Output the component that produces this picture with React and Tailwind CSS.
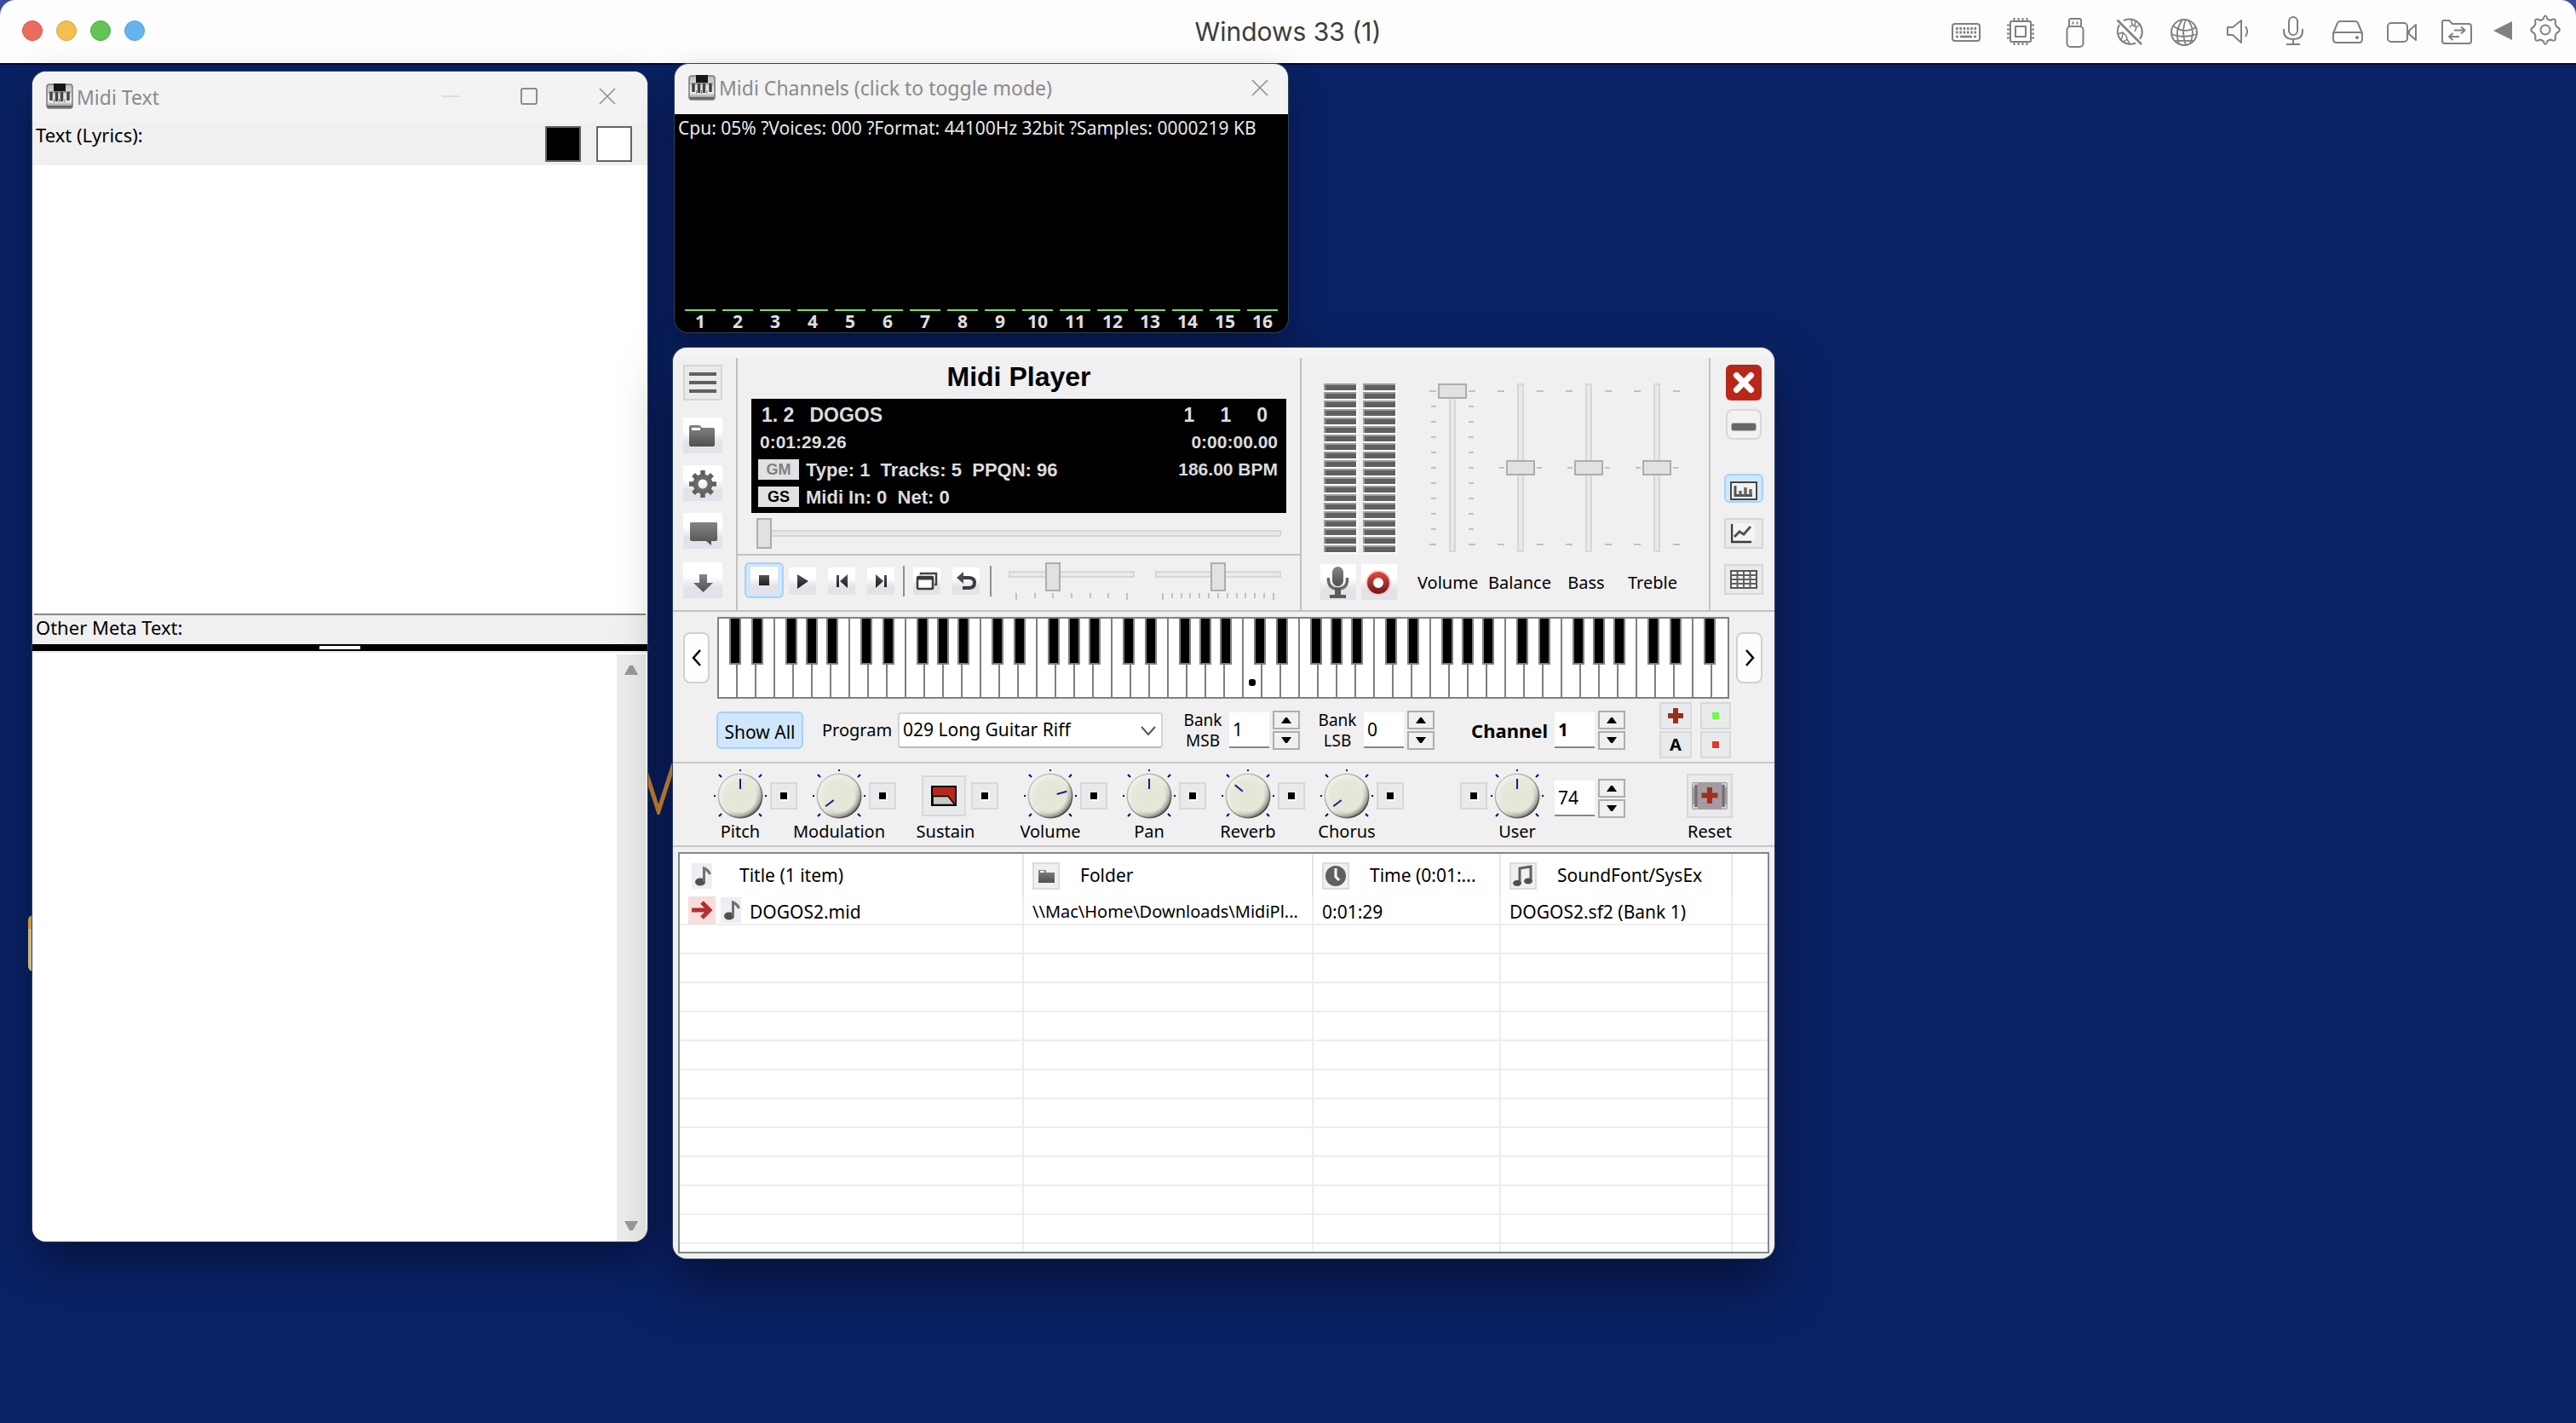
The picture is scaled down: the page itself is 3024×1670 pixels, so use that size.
import React from "react";

const UI = "font-['Noto_Sans','Open_Sans',sans-serif]";
const ARIAL = "font-['Liberation_Sans',Arial,sans-serif]";

/* ---------- menu bar icons ---------- */

function BarIcon({ label, children, className = "w-16" }) {
  return (
    <button type="button" aria-label={label} className={`flex h-[74px] items-center justify-center ${className}`}>
      <svg viewBox="0 0 40 40" className="h-10 w-10" fill="none" stroke="#808080" strokeWidth="2" strokeLinejoin="round">
        {children}
      </svg>
    </button>
  );
}

function MenuBarIcons() {
  return (
    <div className="absolute right-2 top-0 flex">
      <BarIcon label="Keyboard">
        <rect x="4" y="11" width="32" height="20" rx="3" />
        <path d="M8 16.500h24M8 21h24" strokeWidth="3" strokeDasharray="2.6 1.7" />
        <path d="M8 26h3M13 26h14M29 26h3" strokeWidth="2.600" />
      </BarIcon>
      <BarIcon label="Processor">
        <rect x="8" y="8" width="24" height="24" rx="1" />
        <rect x="14" y="14" width="12" height="12" />
        <path d="M12.500 4v4M17.500 4v4M22.500 4v4M27.500 4v4M12.500 32v4M17.500 32v4M22.500 32v4M27.500 32v4M4 12.500h4M4 17.500h4M4 22.500h4M4 27.500h4M32 12.500h4M32 17.500h4M32 22.500h4M32 27.500h4" />
      </BarIcon>
      <BarIcon label="USB">
        <rect x="10.500" y="14" width="19" height="24" rx="4" />
        <path d="M13 14V7q0-2 2-2h10q2 0 2 2v7M17.500 8.500v3M22.500 8.500v3" />
      </BarIcon>
      <BarIcon label="Network disconnected">
        <path d="M13 7A15 15 0 0 1 32 29M8 12A15 15 0 0 0 27 33.500" />
        <path d="M5.500 6.500L34 35" strokeWidth="2.500" />
        <path d="M22 6l1 6-3 3M23 12l5 3 5-4M28 15l-2 5M27 8l-1 5M6 23l6-2 4 4M12 21l-1 7-3 2M16 25l1 4-4 3M17 29l3 5" strokeWidth="1.500" />
      </BarIcon>
      <BarIcon label="Globe">
        <circle cx="20" cy="21" r="15" />
        <path d="M18 6Q8 20 14 34M22 6Q16 20 22 36M24 6Q34 18 27 34M8 14Q20 23 34 15M5 23Q18 29 35 23M9 31Q20 30 32 31" strokeWidth="1.750" />
      </BarIcon>
      <BarIcon label="Sound">
        <path d="M7 15h6l10-8v26l-10-9H7zM28 14q4 6 0 12" />
      </BarIcon>
      <BarIcon label="Microphone">
        <rect x="15" y="3" width="10" height="21" rx="5" />
        <path d="M9 17v2q0 10 11 10t11-10v-2M20 29v6M12 35h16" />
      </BarIcon>
      <BarIcon label="Disk">
        <path d="M3 22L8 10q1-2 3-2h18q2 0 3 2l5 12v7q0 4-4 4H7q-4 0-4-4zM3 22q1-1 4-1h26q3 0 4 1" />
        <circle cx="31" cy="27" r="1.500" fill="#808080" strokeWidth="1" />
      </BarIcon>
      <BarIcon label="Camera">
        <rect x="3" y="10" width="23" height="22" rx="4" />
        <path d="M28 19l8-7v18l-8-7z" />
      </BarIcon>
      <BarIcon label="Shared folder">
        <path d="M3 9q0-2 2-2h6l4 4h19q3 0 3 3v17q0 3-3 3H6q-3 0-3-3z" />
        <path d="M17 18.500h12M25 14.500l4.500 4-4.500 4M23 26H11.500M15.500 22l-4.500 4 4.500 4" />
      </BarIcon>
      <BarIcon label="Collapse" className="w-11">
        <path d="M9 19L31 8v22z" fill="#808080" stroke="none" />
      </BarIcon>
      <BarIcon label="Settings" className="w-14">
        <circle cx="20" cy="18" r="5.500" />
        <path d="M17.500 5.500Q20 -2.500 22.500 5.500L26 7Q33.500 3 31.500 10.500L33 14Q40.500 18 33 22L31.500 25.500Q33.500 33 26 29.500L22.500 31Q20 38.500 17.500 31L14 29.500Q6.500 33 8.500 25.500L7 22Q-.5 18 7 14L8.500 10.500Q6.500 3 14 7z" />
      </BarIcon>
    </div>
  );
}

function AppIcon() {
  return (
    <svg viewBox="0 0 32 30" className="h-[30px] w-8 shrink-0" aria-hidden="true">
      <defs>
        <linearGradient id="appBody" x1="0" y1="0" x2="0" y2="1">
          <stop offset="0" stopColor="#bcbcbc" />
          <stop offset=".7" stopColor="#f2f2f2" />
          <stop offset="1" stopColor="#777" />
        </linearGradient>
      </defs>
      <rect x="1" y="1" width="30" height="28" rx="3" fill="url(#appBody)" stroke="#777" strokeWidth="1.500" />
      <rect x="9" y="0" width="14" height="9" fill="#161616" />
      <path d="M3 10h26" stroke="#888" strokeWidth="1.500" />
      <path d="M6 10v10M12.500 10v11M18.500 10v11M26 10v10" stroke="#444" strokeWidth="3.500" />
      <path d="M9.500 18v4M15.500 18v4M22 18v4" stroke="#777" strokeWidth="1" />
      <path d="M2 27h28" stroke="#666" strokeWidth="2" />
    </svg>
  );
}

function CloseGlyph() {
  return (
    <svg viewBox="0 0 20 20" className="h-5 w-5" stroke="#8c8c8c" strokeWidth="1.500">
      <path d="M1 1L19 19M19 1L1 19" />
    </svg>
  );
}

/* ---------- Midi Text window ---------- */

function MidiTextWindow() {
  return (
    <section className="absolute left-[38px] top-[84px] flex h-[1373px] w-[722px] flex-col overflow-hidden rounded-2xl bg-white shadow-[0_0_0_1px_#33415f,0_24px_50px_rgba(0,0,20,0.45)]">
      <header className="flex h-[60px] shrink-0 items-center bg-[#f3f3f3] pb-0.5 pl-4 pr-[37px]">
        <AppIcon />
        <h2 className="grow pl-1 pt-0.5 text-[23px] leading-8 text-[#8a8a8a]">Midi Text</h2>
        <div className="flex items-center gap-[72px]">
          <button type="button" aria-label="Minimize" className="flex h-5 w-5 items-center">
            <span className="block h-0.5 w-5 bg-[#dcdcdc]" />
          </button>
          <button type="button" aria-label="Maximize" className="h-5 w-5 rounded-[3px] border-2 border-[#8c8c8c]" />
          <button type="button" aria-label="Close">
            <CloseGlyph />
          </button>
        </div>
      </header>
      <div className="flex h-[50px] shrink-0 justify-between bg-[#f0f0f0] pl-1 pr-[18px] pt-1">
        <label htmlFor="lyrics" className="text-[22px] leading-5 text-black">Text (Lyrics):</label>
        <div className="flex gap-[18px]">
          <button type="button" aria-label="Text colour" className="h-[42px] w-[42px] border-2 border-[#646464] bg-black" />
          <button type="button" aria-label="Background colour" className="h-[42px] w-[42px] border-2 border-[#646464] bg-white" />
        </div>
      </div>
      <textarea id="lyrics" readOnly className="mx-0.5 h-[528px] shrink-0 resize-none border-b-2 border-[#868686] bg-white outline-none" />
      <div className="h-[34px] shrink-0 bg-[#f0f0f0] pl-1">
        <label htmlFor="meta" className="text-[22px] leading-7 text-black">Other Meta Text:</label>
      </div>
      <div className="flex h-2 shrink-0 items-center justify-center bg-black">
        <span className="h-1 w-12 bg-white" />
      </div>
      <div className="flex grow border-t-2 border-[#ececec]">
        <textarea id="meta" readOnly className="grow resize-none bg-white outline-none" />
        <div className="mr-0.5 mt-0.5 flex w-[34px] flex-col items-center justify-between bg-[#ececec] py-3">
          <svg viewBox="0 0 16 12" className="h-3 w-4" fill="#9a9a9a"><path d="M0 12L6 1h4l6 11z" /></svg>
          <svg viewBox="0 0 16 12" className="h-3 w-4" fill="#9a9a9a"><path d="M0 0L6 11h4l6-11z" /></svg>
        </div>
      </div>
    </section>
  );
}

/* ---------- Midi Channels window ---------- */

function ChannelsWindow() {
  const channels = Array.from({ length: 16 }, (_, i) => i + 1);
  return (
    <section className="absolute left-[792px] top-[75px] flex h-[315px] w-[720px] flex-col overflow-hidden rounded-2xl bg-black shadow-[0_0_0_1px_#33415f,0_20px_40px_rgba(0,0,20,0.4)]">
      <header className="flex h-[59px] shrink-0 items-center bg-[#f3f3f3] pb-1 pl-4 pr-[23px]">
        <AppIcon />
        <h2 className="grow whitespace-nowrap pl-1 text-[23px] leading-8 text-[#8a8a8a]">Midi Channels (click to toggle mode)</h2>
        <button type="button" aria-label="Close">
          <CloseGlyph />
        </button>
      </header>
      <p className="whitespace-nowrap pl-1 pt-0.5 text-[21px] leading-7 text-[#e8e8e8]">
        Cpu: 05% ?Voices: 000 ?Format: 44100Hz 32bit ?Samples: 0000219 KB
      </p>
      <ol className="mt-auto grid grid-cols-16 px-2">
        {channels.map((n) => (
          <li key={n} className="flex flex-col items-center pb-px">
            <span className="h-0.5 w-9 bg-[#77e05a]" />
            <span className="text-[21px] font-bold leading-6 text-[#e0e0e0]">{n}</span>
          </li>
        ))}
      </ol>
    </section>
  );
}

/* ---------- player pieces ---------- */

function ShadedDefs() {
  return (
    <svg className="absolute h-0 w-0" aria-hidden="true">
      <defs>
        <linearGradient id="shade" x1="0" y1="0" x2="0" y2="1">
          <stop offset="0" stopColor="#858585" />
          <stop offset="1" stopColor="#505050" />
        </linearGradient>
        <linearGradient id="shadeDark" x1="0" y1="0" x2="0" y2="1">
          <stop offset="0" stopColor="#555" />
          <stop offset="1" stopColor="#1c1c1c" />
        </linearGradient>
        <linearGradient id="shadeRed" x1="0" y1="0" x2="0" y2="1">
          <stop offset="0" stopColor="#d2443c" />
          <stop offset="1" stopColor="#7e1c1c" />
        </linearGradient>
        <linearGradient id="knobRim" x1=".15" y1=".1" x2=".85" y2=".9">
          <stop offset="0" stopColor="#c9c9c9" />
          <stop offset=".5" stopColor="#a5a5a0" />
          <stop offset=".75" stopColor="#777" />
          <stop offset="1" stopColor="#333" />
        </linearGradient>
        <radialGradient id="knobFace" cx=".5" cy=".5" r=".5" fx=".5" fy=".5">
          <stop offset="0" stopColor="#e3e5d5" />
          <stop offset=".72" stopColor="#e6e8da" />
          <stop offset="1" stopColor="#e6e8da" stopOpacity="0" />
        </radialGradient>
        <linearGradient id="knobShine" x1=".15" y1=".1" x2=".85" y2=".9">
          <stop offset="0" stopColor="#f4f4f0" />
          <stop offset=".55" stopColor="#e9e9df" />
          <stop offset="1" stopColor="#6a6a66" />
        </linearGradient>
      </defs>
    </svg>
  );
}

const GLOSS = "bg-linear-to-b from-white from-40% to-[#e2e2e8] to-70%";

function SideButton({ label, children, className }) {
  return (
    <button type="button" aria-label={label} className={`flex h-[42px] w-[46px] items-center justify-center ${className}`}>
      <svg viewBox="0 0 34 34" className="h-[34px] w-[34px]">{children}</svg>
    </button>
  );
}

function LeftRail() {
  return (
    <div className="w-[76px] shrink-0 border-r-2 border-[#c2c2c2] pl-3 pt-2">
      <SideButton label="Menu" className="border-2 border-[#d4d6d8] bg-[#e8eaec]">
        <path d="M1 7h32M1 17h32M1 27h32" stroke="#606060" strokeWidth="4" />
      </SideButton>
      <SideButton label="Open" className={`mt-5 ${GLOSS}`}>
        <path d="M1 7q0-2 2-2h10q1 0 2 2l1 1h13q2 0 2 2v18q0 2-2 2H3q-2 0-2-2z" fill="url(#shade)" />
        <path d="M4 8h10v3H4z" fill="#fff" />
      </SideButton>
      <SideButton label="Settings" className={`mt-3.5 ${GLOSS}`}>
        <circle cx="17" cy="18" r="8.500" fill="none" stroke="#686868" strokeWidth="6" />
        <path d="M17 2v6M17 28v6M1 18h6M27 18h6M6 7l4 4M24 25l4 4M28 7l-4 4M10 25l-4 4" stroke="#606060" strokeWidth="5.500" />
      </SideButton>
      <SideButton label="Text" className={`mt-3.5 ${GLOSS}`}>
        <path d="M2 8q0-1 2-1h28q2 0 2 1v19q0 2-2 2h-5v5l-6-5H4q-2 0-2-2z" fill="url(#shade)" />
      </SideButton>
      <SideButton label="Down" className={`mt-4 ${GLOSS}`}>
        <path d="M13 10h9v10h7L17.500 31 6 20h7z" fill="url(#shade)" />
      </SideButton>
    </div>
  );
}

function Lcd() {
  return (
    <div className={`mx-4 h-[134px] bg-black py-[3px] pl-2 pr-2.5 text-[21px] font-bold text-[#dcdcdc] ${ARIAL}`}>
      <div className="flex h-8 items-center justify-between pl-1 pr-3 text-[23px]">
        <span className="flex gap-[18px]"><span>1. 2</span><span>DOGOS</span></span>
        <span className="flex gap-[30px]"><span>1</span><span>1</span><span>0</span></span>
      </div>
      <div className="flex h-8 items-center justify-between pl-0.5">
        <span>0:01:29.26</span>
        <span>0:00:00.00</span>
      </div>
      <div className="flex h-8 items-center justify-between">
        <span className="flex items-center gap-2">
          <button type="button" className="h-6 w-12 bg-[#e1e1e1] text-[18px] leading-6 text-[#808080]">GM</button>
          <span className="whitespace-pre text-[22px]">Type: 1  Tracks: 5  PPQN: 96</span>
        </span>
        <span>186.00 BPM</span>
      </div>
      <div className="flex h-8 items-center gap-2">
        <button type="button" className="h-6 w-12 bg-[#e1e1e1] text-[18px] leading-6 text-black">GS</button>
        <span className="whitespace-pre text-[22px]">Midi In: 0  Net: 0</span>
      </div>
    </div>
  );
}

const RANGE =
  "block appearance-none bg-transparent outline-none [&::-webkit-slider-runnable-track]:bg-[#e7eaea] [&::-webkit-slider-runnable-track]:shadow-[inset_0_0_0_2px_#d6d6d6] [&::-webkit-slider-thumb]:appearance-none [&::-webkit-slider-thumb]:border-2 [&::-webkit-slider-thumb]:border-[#adadad] [&::-webkit-slider-thumb]:bg-[#e1e1e1]";

const H_RANGE = "h-2 w-full [&::-webkit-slider-runnable-track]:h-2 [&::-webkit-slider-thumb]:w-[18px]";

function TickSlider({ label, value, max }) {
  const ticks = Array.from({ length: max + 1 }, (_, i) => i);
  return (
    <div className="w-[148px]">
      <input
        type="range"
        aria-label={label}
        min="0"
        max={max}
        defaultValue={value}
        className={`${RANGE} ${H_RANGE} mt-[18px] [&::-webkit-slider-thumb]:-mt-2.5 [&::-webkit-slider-thumb]:h-[34px]`}
      />
      <div className="mt-[18px] flex justify-between px-2">
        {ticks.map((t) => (
          <span key={t} className={t === 0 || t === max ? "h-2 w-0.5 bg-[#c0c0c0]" : "h-1.5 w-0.5 bg-[#c0c0c0]"} />
        ))}
      </div>
    </div>
  );
}

function ToolButton({ label, children }) {
  return (
    <button type="button" aria-label={label} className={`flex h-8 w-8 items-center justify-center ${GLOSS}`}>
      <svg viewBox="0 0 32 32" className="h-8 w-8">{children}</svg>
    </button>
  );
}

function Toolbar() {
  return (
    <div className="flex h-16 items-start pl-2 pr-[22px]">
      <button type="button" aria-label="Stop" className="mt-2 flex h-[42px] w-[46px] items-center justify-center rounded-md border-2 border-[#a6d2fa] bg-[#cfe6fb]">
        <svg viewBox="0 0 32 32" className={`h-8 w-8 ${GLOSS}`}>
          <rect x="10" y="10" width="12" height="12" fill="url(#shadeDark)" />
        </svg>
      </button>
      <div className="mt-3.5 flex gap-3.5 pl-1.5">
        <ToolButton label="Play"><path d="M10 8l13 8-13 9z" fill="url(#shadeDark)" /></ToolButton>
        <ToolButton label="Previous"><path d="M10 9h3v14h-3zM23 8v16l-9-8z" fill="url(#shadeDark)" /></ToolButton>
        <ToolButton label="Next"><path d="M20 9h3v14h-3zM10 8v16l9-8z" fill="url(#shadeDark)" /></ToolButton>
      </div>
      <span className="ml-2.5 mt-3 h-9 w-0.5 bg-[#909090]" />
      <div className="mt-3.5 flex gap-3.5 pl-2.5">
        <ToolButton label="Windows">
          <path d="M9 8.500V7h18v13h-2" fill="none" stroke="#444" strokeWidth="2.500" />
          <rect x="5" y="11" width="18" height="14" rx="1" fill="#fff" stroke="#3a3a3a" strokeWidth="2.500" />
          <path d="M5 13h18" stroke="#3a3a3a" strokeWidth="3" />
        </ToolButton>
        <ToolButton label="Undo">
          <path d="M10 12h9q7 0 7 6t-7 6h-7" fill="none" stroke="#3c3c3c" strokeWidth="4" />
          <path d="M5 12l8-7v14z" fill="#4a4a4a" />
        </ToolButton>
      </div>
      <span className="ml-3 mt-3 h-9 w-0.5 bg-[#909090]" />
      <div className="flex grow justify-end gap-6">
        <TickSlider label="Tempo" value={2} max={6} />
        <TickSlider label="Key" value={6} max={12} />
      </div>
    </div>
  );
}

function Meter() {
  return (
    <div className="flex w-[38px] flex-col gap-0.5">
      {Array.from({ length: 20 }, (_, i) => (
        <span key={i} className="h-2 border-l-2 border-t-2 border-[#9c9c9c] bg-[#606060] shadow-[2px_2px_0_#fff]" />
      ))}
    </div>
  );
}

function VerticalSlider({ id, value, ticks }) {
  const col = Array.from({ length: ticks }, (_, i) => i);
  return (
    <div className="flex h-[198px] w-20 justify-between pl-3.5 pr-3">
      <div className="flex flex-col items-end justify-between py-2">
        {col.map((t) => (
          <span key={t} className={t === 0 || t === ticks - 1 ? "h-0.5 w-2 bg-[#c0c0c0]" : "h-0.5 w-1.5 bg-[#c0c0c0]"} />
        ))}
      </div>
      <input
        id={id}
        type="range"
        min="0"
        max="100"
        defaultValue={value}
        className={`${RANGE} h-[198px] w-2 [direction:rtl] [writing-mode:vertical-lr] [&::-webkit-slider-runnable-track]:w-2 [&::-webkit-slider-thumb]:-ml-[13px] [&::-webkit-slider-thumb]:h-[18px] [&::-webkit-slider-thumb]:w-[34px]`}
      />
      <div className="flex flex-col items-start justify-between py-2">
        {col.map((t) => (
          <span key={t} className={t === 0 || t === ticks - 1 ? "h-0.5 w-2 bg-[#c0c0c0]" : "h-0.5 w-1.5 bg-[#c0c0c0]"} />
        ))}
      </div>
    </div>
  );
}

function Mixer() {
  return (
    <div className="flex w-[480px] shrink-0 border-r-2 border-[#c2c2c2] pl-[22px] pt-[30px]">
      <div>
        <div className="flex gap-2 pl-1">
          <Meter />
          <Meter />
        </div>
        <div className="mt-3.5 flex gap-1.5">
          <button type="button" aria-label="Microphone" className={`h-[42px] w-[42px] ${GLOSS}`}>
            <svg viewBox="0 0 42 42" className="h-[42px] w-[42px]">
              <rect x="14" y="3" width="13" height="23" rx="6.500" fill="url(#shade)" />
              <path d="M9.500 16v4q1 9 11 9t11-9v-4" fill="none" stroke="#6a6a6a" strokeWidth="3.500" />
              <path d="M17 28h7v8h6v4H11v-4h6z" fill="#5a5a5a" />
            </svg>
          </button>
          <button type="button" aria-label="Record" className={`h-[42px] w-[42px] ${GLOSS}`}>
            <svg viewBox="0 0 42 42" className="h-[42px] w-[42px]">
              <circle cx="20" cy="22" r="15" fill="#f6c4c0" opacity=".7" />
              <circle cx="20" cy="22" r="9.500" fill="#fff" stroke="url(#shadeRed)" strokeWidth="7" />
            </svg>
          </button>
        </div>
      </div>
      <div className="ml-6">
        <div className="flex">
          <VerticalSlider id="vol" value={100} ticks={11} />
          <VerticalSlider id="bal" value={50} ticks={3} />
          <VerticalSlider id="bass" value={50} ticks={3} />
          <VerticalSlider id="treb" value={50} ticks={3} />
        </div>
        <div className="mt-[22px] flex text-center text-[20px] leading-7 text-black">
          <label htmlFor="vol" className="w-20 pr-2.5">Volume</label>
          <label htmlFor="bal" className="w-20">Balance</label>
          <label htmlFor="bass" className="w-20 pr-1">Bass</label>
          <label htmlFor="treb" className="w-20 pr-2">Treble</label>
        </div>
      </div>
    </div>
  );
}

function RightRail() {
  return (
    <div className="flex w-[75px] shrink-0 flex-col items-center pl-0.5 pt-2">
      <button type="button" aria-label="Close" className="h-[42px] w-[42px] rounded-md bg-[#b9271b]">
        <svg viewBox="0 0 42 42" className="h-[42px] w-[42px]">
          <path d="M12.500 12.500L29.500 29.500M29.500 12.500L12.500 29.500" stroke="#fff" strokeWidth="7" strokeLinecap="round" />
        </svg>
      </button>
      <button type="button" aria-label="Minimize" className="mt-2.5 flex h-9 w-[42px] items-center justify-center rounded-lg border-2 border-[#d6d8da] bg-[#f2f2f4]">
        <span className="mt-1.5 h-2 w-7 rounded-xs bg-[#666] shadow-[0_0_0_1px_#b4b4b4]" />
      </button>
      <button type="button" aria-label="Channels" className="mt-10 flex h-[34px] w-[46px] items-center justify-center rounded-md border-2 border-[#a6d2fa] bg-[#cfe6fb]">
        <svg viewBox="0 0 32 22" className="mt-1.5 h-[22px] w-8">
          <rect x="1" y="1" width="30" height="20" fill="#f2f2f2" stroke="#444" strokeWidth="2" />
          <path d="M6 5v11.500h20" fill="none" stroke="#555" strokeWidth="3" />
          <path d="M12 11v5M18 7v9M24 9v7" stroke="#666" strokeWidth="3.500" />
        </svg>
      </button>
      <button type="button" aria-label="Graph" className="mt-[18px] flex h-9 w-[46px] items-center border-2 border-[#d4d6d8] bg-[#e8eaec] pl-1.5">
        <svg viewBox="0 0 28 24" className="h-6 w-7">
          <rect x="2" y="0" width="26" height="21" fill="#f5f5f8" />
          <path d="M1 1v21h23" fill="none" stroke="#3c3c3c" strokeWidth="2.500" />
          <path d="M4 16l6-6 5 3 8-9" fill="none" stroke="#555" strokeWidth="3" />
        </svg>
      </button>
      <button type="button" aria-label="Grid" className="mt-[18px] flex h-9 w-[46px] items-center justify-center border-2 border-[#d4d6d8] bg-[#e8eaec]">
        <svg viewBox="0 0 32 22" className="h-[22px] w-8">
          <rect x="1" y="1" width="30" height="20" fill="#f4f4f4" stroke="#555" strokeWidth="2" />
          <path d="M1 6h30M1 11h30M1 16h30M8.500 1v20M16 1v20M23.500 1v20" stroke="#606060" strokeWidth="2" />
        </svg>
      </button>
    </div>
  );
}

/* ---------- piano ---------- */

const BLACK_OFFSET = { 0: "left-3", 1: "left-4", 3: "left-3", 4: "left-3.5", 5: "left-4" };
const MARKED_KEY = 28;

function Piano() {
  return (
    <div className="grid h-24 grow grid-cols-[repeat(54,minmax(0,1fr))] border-y-2 border-[#808080] bg-white">
      {Array.from({ length: 54 }, (_, i) => {
        const black = i === 53 ? undefined : BLACK_OFFSET[i % 7];
        return (
          <div key={i} className="relative border-l-2 border-[#808080] last:border-r-2">
            {black && <span className={`absolute top-0 z-10 h-[54px] w-3.5 border-x-2 border-b-2 border-[#808080] bg-black ${black}`} />}
            {i === MARKED_KEY && <span className="absolute left-1.5 top-[71px] h-2 w-2 rounded-[3px] bg-black" />}
          </div>
        );
      })}
    </div>
  );
}

function ArrowButton({ label, d }) {
  return (
    <button type="button" aria-label={label} className="mt-[18px] flex h-[60px] w-[31px] shrink-0 items-center justify-center rounded-lg border-2 border-[#d0d0d0] bg-[#fdfdfd]">
      <svg viewBox="0 0 14 20" className="h-5 w-3.5" fill="none" stroke="#000" strokeWidth="2.500"><path d={d} /></svg>
    </button>
  );
}

/* ---------- channel controls ---------- */

function Spinner({ name }) {
  const btn = "flex h-[22px] w-8 items-center justify-center border-2 border-[#adadad] bg-[#f0f0f0]";
  return (
    <div className="flex flex-col gap-0.5">
      <button type="button" aria-label={`${name} up`} className={btn}>
        <svg viewBox="0 0 12 8" className="h-2 w-3"><path d="M0 8L5 1h2l5 7z" /></svg>
      </button>
      <button type="button" aria-label={`${name} down`} className={btn}>
        <svg viewBox="0 0 12 8" className="h-2 w-3"><path d="M0 0l5 7h2l5-7z" /></svg>
      </button>
    </div>
  );
}

function NumberBox({ id, label, value, bold }) {
  return (
    <div className="flex items-center gap-1">
      <input
        id={id}
        type="text"
        aria-label={label}
        readOnly
        value={value}
        className={`h-[42px] w-[47px] border-b-2 border-[#868686] bg-white pl-1 text-[21px] text-black outline-none ${bold ? "font-bold" : ""}`}
      />
      <Spinner name={id} />
    </div>
  );
}

function DotButton({ label, children, className = "h-8 w-8" }) {
  return (
    <button type="button" aria-label={label} className={`flex items-center justify-center border-2 border-[#d6d8da] bg-[#e8eaec] ${className}`}>
      {children || <span className="h-2 w-2 bg-black shadow-[1px_1px_0_1px_#fff]" />}
    </button>
  );
}

function ChannelRow() {
  return (
    <div className="flex h-[74px] items-center pl-[51px] text-[21px] text-black">
      <button type="button" className="h-11 w-[102px] rounded-md border-2 border-[#a6d2fa] bg-[#cfe6fb] pt-1 leading-6">Show All</button>
      <label htmlFor="program" className="w-[111px] shrink-0 pl-[22px] text-[20px] leading-6">Program</label>
      <div className="relative">
        <select id="program" defaultValue="029" className="block h-[42px] w-[311px] appearance-none rounded-sm border-2 border-[#d4d4d4] border-b-[#bcbcbc] bg-white pl-1 outline-none">
          <option value="029">029 Long Guitar Riff</option>
        </select>
        <svg viewBox="0 0 18 12" className="pointer-events-none absolute right-2 top-4 h-3 w-[18px]" fill="none" stroke="#555" strokeWidth="2">
          <path d="M1 1l8 9 8-9" />
        </svg>
      </div>
      <label htmlFor="msb" className="ml-5 w-[58px] pr-1 text-center text-[19px] leading-6">Bank<br />MSB</label>
      <NumberBox id="msb" value="1" />
      <label htmlFor="lsb" className="ml-[17px] w-[58px] pr-1 text-center text-[19px] leading-6">Bank<br />LSB</label>
      <NumberBox id="lsb" value="0" />
      <label htmlFor="channel" className="ml-8 w-[109px] pr-2 text-right text-[22px] font-bold">Channel</label>
      <NumberBox id="channel" value="1" bold />
      <div className="ml-10 grid grid-cols-[38px_36px] gap-x-2.5 gap-y-0.5">
        <DotButton label="Add" className="h-8">
          <svg viewBox="0 0 18 18" className="h-[18px] w-[18px]"><path d="M9 0v18M0 9h18" stroke="#97301c" strokeWidth="6" /></svg>
        </DotButton>
        <DotButton label="Enable" className="h-8"><span className="h-2 w-2 bg-[#6dfb45] shadow-[1px_1px_0_1px_#fff]" /></DotButton>
        <DotButton label="Auto" className="h-8"><span className="text-[20px] font-bold leading-6">A</span></DotButton>
        <DotButton label="Disable" className="h-8"><span className="h-2 w-2 bg-[#ee3224] shadow-[1px_1px_0_1px_#fff]" /></DotButton>
      </div>
    </div>
  );
}

/* ---------- knobs ---------- */

function Knob({ label, angle }) {
  return (
    <label className="relative flex w-[70px] flex-col items-center">
      <input type="range" min="-135" max="135" defaultValue={angle} className="sr-only" />
      <svg viewBox="-31 -31 62 62" className="h-[62px] w-[62px]" aria-hidden="true">
        <path
          d="M0 -31v2M-25 -25l3 3M25 -25l-3 3M-31 0h2M31 0h-2M-25 24l3 -3M25 24l-3 -3"
          stroke="#000080"
          strokeWidth="2"
        />
        <circle r="26.500" fill="url(#knobRim)" />
        <circle r="25" fill="url(#knobShine)" />
        <circle r="25" fill="url(#knobFace)" />
        <path d="M0 -20v12" stroke="#1a1a8c" strokeWidth="2" transform={`rotate(${angle})`} />
      </svg>
      <span className="whitespace-nowrap text-[20px] leading-[22px] text-black">{label}</span>
    </label>
  );
}

function KnobUnit({ label, angle }) {
  return (
    <div className="flex">
      <Knob label={label} angle={angle} />
      <DotButton label={`${label} lock`} className="mt-[15px] h-8 w-8" />
    </div>
  );
}

function KnobRow() {
  return (
    <div className="flex h-[98px] shrink-0 border-b-2 border-[#c8c8c8] pl-11 pt-[7px] text-[20px] text-black">
      <div className="flex gap-3.5">
        <KnobUnit label="Pitch" angle={0} />
        <KnobUnit label="Modulation" angle={-128} />
      </div>
      <div className="ml-6 mr-[26px] flex">
        <div className="flex w-16 flex-col items-center">
          <button type="button" aria-labelledby="sustain" className="mt-[7px] flex h-12 w-[52px] items-center justify-center border-2 border-[#d6d8da] bg-[#e8eaec]">
            <svg viewBox="0 0 30 24" className="h-6 w-[30px]">
              <rect x="1" y="1" width="28" height="22" fill="#b9271b" stroke="#000" strokeWidth="2" />
              <path d="M2 12.500h18l8 10H2z" fill="#c8c8c8" stroke="#000" strokeWidth="1.500" />
            </svg>
          </button>
          <span id="sustain" className="mt-[7px] pl-1 leading-[22px]">Sustain</span>
        </div>
        <DotButton label="Sustain lock" className="mt-[15px] h-8 w-8" />
      </div>
      <div className="flex gap-3.5">
        <KnobUnit label="Volume" angle={75} />
        <KnobUnit label="Pan" angle={0} />
        <KnobUnit label="Reverb" angle={-50} />
        <KnobUnit label="Chorus" angle={-128} />
      </div>
      <DotButton label="User lock" className="ml-[66px] mt-[15px] h-8 w-8" />
      <Knob label="User" angle={0} />
      <div className="ml-[9px] mt-[11px]">
        <NumberBox id="controller" label="Controller number" value="74" />
      </div>
      <div className="ml-[72px] flex flex-col items-center">
        <button type="button" aria-labelledby="reset" className="mt-[5px] flex h-[52px] w-[54px] items-center justify-center border-2 border-[#d6d8da] bg-[#e8eaec]">
          <svg viewBox="0 0 42 34" className="h-[34px] w-[42px]">
            <rect x="0" y="1" width="42" height="32" rx="2" fill="#a49ca2" />
            <path d="M5 3v27M37 3v27" stroke="#746c72" strokeWidth="3" />
            <path d="M2 7V3h5M40 7V3h-5M2 27v4h5M40 27v4h-5" fill="none" stroke="#d0ccd0" strokeWidth="2" />
            <path d="M21 7v19M11.500 16.500h19" stroke="#a0301c" strokeWidth="6" />
          </svg>
        </button>
        <span id="reset" className="mt-[5px] leading-[22px]">Reset</span>
      </div>
    </div>
  );
}

/* ---------- playlist ---------- */

function NoteIcon() {
  return (
    <svg viewBox="0 0 24 30" className="h-[30px] w-6 shrink-0" aria-hidden="true">
      <rect width="24" height="30" fill="#eeeef2" />
      <ellipse cx="10" cy="22" rx="6" ry="4.500" fill="#505050" />
      <path d="M14.500 22V6q5 2 7 7" fill="none" stroke="#707070" strokeWidth="3" />
    </svg>
  );
}

function HeadIcon({ children }) {
  return (
    <svg viewBox="0 0 32 32" className="h-8 w-8 shrink-0" aria-hidden="true">
      <rect x="1" y="1" width="30" height="30" fill="#f0f0f3" stroke="#dcdcdc" strokeWidth="2" />
      {children}
    </svg>
  );
}

function Playlist() {
  const head = "border-r-2 border-[#e5e5e5] p-0 pt-0.5 font-normal";
  const cell = "truncate border-b-2 border-r-2 border-[#ededed] p-0 pl-2.5 pt-1 leading-7";
  return (
    <div className="mx-1.5 mb-1.5 mt-1.5 grow overflow-hidden border-2 border-[#828790] bg-white">
      <table className="h-0 w-full table-fixed border-separate border-spacing-0 text-left text-[21px] text-black">
        <colgroup>
          <col className="w-[404px]" />
          <col className="w-[340px]" />
          <col className="w-[220px]" />
          <col className="w-[272px]" />
          <col />
        </colgroup>
        <thead>
          <tr className="h-[50px]">
            <th className={head}><span className="flex items-center gap-8 pl-3.5"><NoteIcon />Title (1 item)</span></th>
            <th className={head}>
              <span className="flex items-center gap-6 pl-2.5">
                <HeadIcon><path d="M7 9h9v3h10v12H7z" fill="url(#shade)" /><path d="M9 10h5v2H9z" fill="#fff" /></HeadIcon>Folder
              </span>
            </th>
            <th className={head}>
              <span className="flex items-center gap-6 pl-2.5">
                <HeadIcon><circle cx="16" cy="16" r="12" fill="#606060" /><path d="M16 7v10l4 4" fill="none" stroke="#fff" strokeWidth="3" /></HeadIcon>Time (0:01:...
              </span>
            </th>
            <th className={head}>
              <span className="flex items-center gap-6 pl-2.5">
                <HeadIcon>
                  <path d="M12 24V7l13-2v16" fill="none" stroke="#606060" strokeWidth="3" />
                  <ellipse cx="9" cy="24.500" rx="5" ry="3.500" fill="#505050" /><ellipse cx="22" cy="22" rx="5" ry="3.500" fill="#505050" />
                </HeadIcon>SoundFont/SysEx
              </span>
            </th>
            <th className="p-0" />
          </tr>
        </thead>
        <tbody>
          <tr className="h-[34px]">
            <td className="border-b-2 border-r-2 border-[#ededed] p-0 pl-2.5">
              <span className="flex h-8 items-center">
                <svg viewBox="0 0 32 32" className="h-8 w-8 shrink-0" aria-hidden="true">
                  <rect width="32" height="32" fill="#f9dcdc" />
                  <path d="M4 16h18M16 7l9 9-9 9" fill="none" stroke="#b03030" strokeWidth="5" />
                </svg>
                <span className="flex items-center gap-2.5 pl-1.5"><NoteIcon /><span className="pt-1 leading-7">DOGOS2.mid</span></span>
              </span>
            </td>
            <td className={`${cell} text-[20px]`}>\\Mac\Home\Downloads\MidiPl...</td>
            <td className={cell}>0:01:29</td>
            <td className={cell}>DOGOS2.sf2 (Bank 1)</td>
            <td className="border-b-2 border-[#ededed] p-0" />
          </tr>
          {Array.from({ length: 12 }, (_, i) => (
            <tr key={i} className="h-[34px]">
              <td className={cell} />
              <td className={cell} />
              <td className={cell} />
              <td className={cell} />
              <td className="border-b-2 border-[#ededed] p-0" />
            </tr>
          ))}
        </tbody>
      </table>
    </div>
  );
}

function PlayerWindow() {
  return (
    <section className="absolute left-[790px] top-[408px] flex h-[1069px] w-[1293px] flex-col overflow-hidden rounded-2xl border-t-12 border-[#f3f3f3] bg-[#f0f0f0] shadow-[0_0_0_1px_#33415f,0_30px_60px_rgba(0,0,20,0.5)]">
      <div className="flex h-[298px] shrink-0 border-b-2 border-[#c2c2c2]">
        <LeftRail />
        <div className="flex grow flex-col border-r-2 border-[#c2c2c2]">
          <h1 className={`h-12 pt-0.5 text-center text-[32px] font-bold leading-10 text-black ${ARIAL}`}>Midi Player</h1>
          <Lcd />
          <div className="h-[50px] shrink-0 border-b-2 border-[#c2c2c2] pl-[22px] pr-[22px] pt-5">
            <input
              type="range"
              aria-label="Position"
              min="0"
              max="100"
              defaultValue="0"
              className={`${RANGE} ${H_RANGE} [&::-webkit-slider-thumb]:-mt-3.5 [&::-webkit-slider-thumb]:h-9`}
            />
          </div>
          <Toolbar />
        </div>
        <Mixer />
        <RightRail />
      </div>
      <div className="shrink-0 border-b-2 border-[#c8c8c8] pt-1.5">
        <div className="flex items-start pl-3 pr-3.5">
          <ArrowButton label="Scroll left" d="M11 1L3 10l8 9" />
          <span className="w-[9px] shrink-0" />
          <Piano />
          <span className="w-2 shrink-0" />
          <ArrowButton label="Scroll right" d="M3 1l8 9-8 9" />
        </div>
        <ChannelRow />
      </div>
      <KnobRow />
      <Playlist />
    </section>
  );
}

export default function App() {
  return (
    <main className={`relative flex h-screen min-h-[1500px] flex-col overflow-hidden bg-[#3c4c9c] ${UI}`}>
      <header className="relative flex h-[74px] shrink-0 items-center justify-center rounded-t-[18px] bg-[#fdfdfd]">
        <div className="absolute left-[26px] top-6 flex gap-4">
          <button type="button" aria-label="Close" className="h-6 w-6 rounded-full border border-[#d05548] bg-[#ed6a5e]" />
          <button type="button" aria-label="Minimize" className="h-6 w-6 rounded-full border border-[#d8a540] bg-[#f4bf4f]" />
          <button type="button" aria-label="Zoom" className="h-6 w-6 rounded-full border border-[#50a945] bg-[#61c554]" />
          <button type="button" aria-label="Coherence" className="h-6 w-6 rounded-full border border-[#5a9fd8] bg-[#65b3ef]" />
        </div>
        <p className="font-['Inter',sans-serif] text-[30px] text-[#3c3c3c]">Windows 33 (1)</p>
        <MenuBarIcons />
      </header>
      <div className="grow border-t-2 border-[#020a3c] bg-[#0a2265]" />
      <svg viewBox="0 0 60 60" className="absolute left-[743px] top-[896px] h-[60px] w-[60px]" fill="none" stroke="#f09a34" strokeWidth="5" aria-hidden="true">
        <path d="M12 0L30 56L48 0" />
      </svg>
      <div className="absolute left-[33px] top-[1074px] h-[66px] w-20 rounded-md border-t-[16px] border-[#ffc040] bg-[#ffe6a0]" />
      <ShadedDefs />
      <MidiTextWindow />
      <ChannelsWindow />
      <PlayerWindow />
    </main>
  );
}
